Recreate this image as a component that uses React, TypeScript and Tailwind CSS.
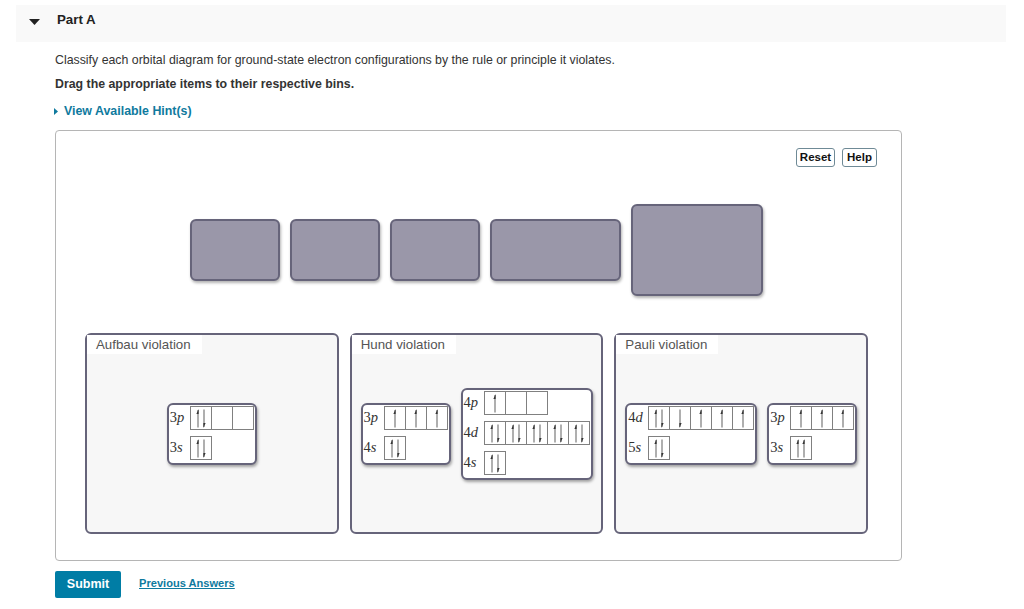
import React from 'react';

type Orbital = '' | 'ud' | 'u' | 'd' | 'uu';

interface Row {
  num: string;
  sub: string;
  boxes: Orbital[];
}

// Half-headed arrows used inside the orbital boxes
const Up = ({ x }: { x: number }) => (
  <>
    <line x1={x} y1="20.5" x2={x} y2="3" stroke="#949494" strokeWidth="1.5" />
    <path d="M8.6 2 L6.4 7 L8.6 7 Z" transform={`translate(${x - 8} 0)`} fill="#333" />
  </>
);

const Down = ({ x }: { x: number }) => (
  <>
    <line x1={x} y1="2.5" x2={x} y2="20" stroke="#949494" strokeWidth="1.5" />
    <path d="M7.4 21 L9.6 16 L7.4 16 Z" transform={`translate(${x - 8} 0)`} fill="#333" />
  </>
);

const Box = ({ kind }: { kind: Orbital }) => (
  <div className="w-[22px] h-[24px] border border-[#808080] -ml-px first:ml-0">
    <svg width="20" height="22" viewBox="0 0 20 22" className="block">
      {kind === 'ud' && (
        <>
          <Up x={7} />
          <Down x={13} />
        </>
      )}
      {kind === 'uu' && (
        <>
          <Up x={7} />
          <Up x={13} />
        </>
      )}
      {kind === 'u' && <Up x={10} />}
      {kind === 'd' && <Down x={10} />}
    </svg>
  </div>
);

const Card = ({ rows }: { rows: Row[] }) => (
  <div className="bg-white border-2 border-[#66647a] rounded-md shadow-[1px_2px_3px_rgba(0,0,0,0.35)] pt-px pb-[3px] pr-px flex flex-col gap-[6px]">
    {rows.map((row) => (
      <div key={row.num + row.sub} className="flex items-center">
        <span className="w-[21px] pl-px text-[14.5px] leading-none text-[#333] font-['Liberation_Serif',serif]">
          {row.num}
          <i>{row.sub}</i>
        </span>
        <div className="flex">
          {row.boxes.map((b, i) => (
            <Box key={i} kind={b} />
          ))}
        </div>
      </div>
    ))}
  </div>
);

const Bin = ({ title, children }: { title: string; children: React.ReactNode }) => (
  <div className="relative w-[254px] h-[201px] bg-[#f7f7f7] border-2 border-[#66647a] rounded-md flex items-center justify-center gap-[10px]">
    <div className="absolute left-0 top-0 bg-white pl-[9px] pr-[11px] h-[19px] text-[13.3px] leading-[19px] text-[#555]">{title}</div>
    {children}
  </div>
);

const Slot = ({ w, h }: { w: string; h: string }) => (
  <div className={`${w} ${h} bg-[#9a97a9] border-2 border-[#66647a] rounded-md shadow-[1px_2px_3px_rgba(0,0,0,0.3)]`} />
);

export default function App() {
  return (
    <div className="w-[1024px] h-[609px] overflow-hidden bg-white pt-[5px] font-['Liberation_Sans',Arial,sans-serif] text-[#333]">
      {/* Part header */}
      <div className="ml-4 w-[990px] h-[37px] bg-[#f9f9f9] flex items-center">
        <svg width="11" height="6" viewBox="0 0 11 6" className="ml-[13px] mb-[3px]">
          <path d="M0 0 H11 L5.5 6 Z" fill="#222" />
        </svg>
        <span className="ml-[17px] mb-[7px] text-[13.3px] font-bold text-[#222]">Part A</span>
      </div>

      <div className="ml-[55px] w-[847px]">
        <p className="mt-[11px] h-[15px] text-[12.35px] leading-[15px]">
          Classify each orbital diagram for ground-state electron configurations by the rule or principle it violates.
        </p>
        <p className="mt-[9px] h-[15px] text-[12.35px] leading-[15px] font-bold">Drag the appropriate items to their respective bins.</p>
        <div className="mt-[12px] h-[15px] flex items-center text-[12.4px] leading-[15px] font-bold text-[#0f7a9e]">
          <svg width="4" height="7" viewBox="0 0 4 7" className="-ml-px">
            <path d="M0 0 L4 3.5 L0 7 Z" fill="#0f7a9e" />
          </svg>
          <span className="ml-[6px]">View Available Hint(s)</span>
        </div>

        {/* Drag and drop panel */}
        <div className="mt-[11px] h-[431px] border border-[#b5b5b5] rounded-[4px] pt-[17px] pl-[29px] pr-[33px]">
          <div className="flex justify-end gap-[7px] h-[19px] -mr-[9px]">
            <button className="h-[19px] w-[39px] border border-[#6f8a96] rounded-[3px] bg-white text-[11.5px] font-bold text-[#111] leading-none">Reset</button>
            <button className="h-[19px] w-[35px] border border-[#6f8a96] rounded-[3px] bg-white text-[11.5px] font-bold text-[#111] leading-none">Help</button>
          </div>

          <div className="mt-[37px] h-[92px] flex items-center justify-center gap-[10px]">
            <Slot w="w-[90px]" h="h-[62px]" />
            <Slot w="w-[90px]" h="h-[62px]" />
            <Slot w="w-[90px]" h="h-[62px]" />
            <Slot w="w-[131px]" h="h-[62px]" />
            <Slot w="w-[132px]" h="h-[92px]" />
          </div>

          <div className="mt-[37px] flex gap-[11px]">
            <Bin title="Aufbau violation">
              <Card
                rows={[
                  { num: '3', sub: 'p', boxes: ['ud', '', ''] },
                  { num: '3', sub: 's', boxes: ['ud'] },
                ]}
              />
            </Bin>
            <Bin title="Hund violation">
              <Card
                rows={[
                  { num: '3', sub: 'p', boxes: ['u', 'u', 'u'] },
                  { num: '4', sub: 's', boxes: ['ud'] },
                ]}
              />
              <Card
                rows={[
                  { num: '4', sub: 'p', boxes: ['u', '', ''] },
                  { num: '4', sub: 'd', boxes: ['ud', 'ud', 'ud', 'ud', 'ud'] },
                  { num: '4', sub: 's', boxes: ['ud'] },
                ]}
              />
            </Bin>
            <Bin title="Pauli violation">
              <Card
                rows={[
                  { num: '4', sub: 'd', boxes: ['ud', 'd', 'u', 'u', 'u'] },
                  { num: '5', sub: 's', boxes: ['ud'] },
                ]}
              />
              <Card
                rows={[
                  { num: '3', sub: 'p', boxes: ['u', 'u', 'u'] },
                  { num: '3', sub: 's', boxes: ['uu'] },
                ]}
              />
            </Bin>
          </div>
        </div>

        {/* Footer actions */}
        <div className="mt-[10px] flex items-center">
          <button className="w-[66px] h-[27px] bg-[#007da5] rounded-[2px] text-white text-[12.5px] font-bold">Submit</button>
          <a className="ml-[18px] mb-[2px] text-[11.1px] font-bold text-[#0f7a9e] underline">Previous Answers</a>
        </div>
      </div>
    </div>
  );
}
